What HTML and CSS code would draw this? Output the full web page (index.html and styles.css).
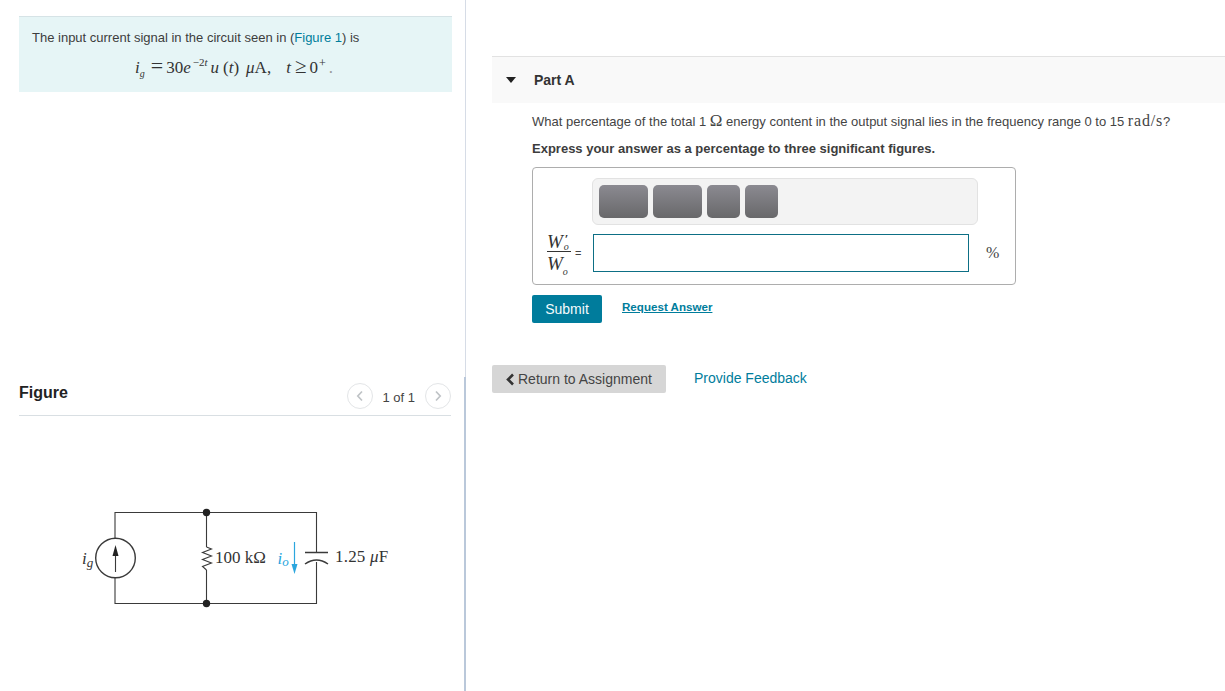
FILE: index.html
```html
<!DOCTYPE html>
<html lang="en">
<head>
<meta charset="utf-8">
<title>Part A</title>
<link rel="stylesheet" href="styles.css">
</head>
<body>
<div class="page">
  <aside class="left">
    <section class="intro">
      <p class="intro-text">The input current signal in the circuit seen in (<a class="link" href="#">Figure 1</a>) is</p>
      <p class="formula"><i>i<sub>g</sub></i><span class="eq">=</span>30<i>e</i><sup class="exp">−2<i>t</i></sup><i>u</i><span class="paren">(<i>t</i>)</span><span class="unit"><i>μ</i>A,</span><i>t</i><span class="ge">≥</span>0<sup class="plus">+</sup><span class="dot">.</span></p>
    </section>
    <header class="figure-head">
      <h2 class="figure-title">Figure</h2>
      <div class="pager">
        <span class="pager-btn"><svg width="10" height="12" viewBox="0 0 10 12"><path d="M7 1.500 2.800 6 7 10.500" fill="none" stroke="#bfc3c6" stroke-width="1.700"/></svg></span>
        <span class="pager-text">1 of 1</span>
        <span class="pager-btn"><svg width="10" height="12" viewBox="0 0 10 12"><path d="M3 1.500 7.200 6 3 10.500" fill="none" stroke="#bfc3c6" stroke-width="1.700"/></svg></span>
      </div>
    </header>
    <div class="figure">
      <svg class="circuit" width="350" height="130" viewBox="0 0 350 130">
        <g fill="none" stroke="#3a3a3a" stroke-width="1.100">
          <path d="M55 48V22.500H256.500V62M256.500 72V113.500H55V88M146.500 22.500V57M146.500 80V113.500"/>
          <path d="M146.500 57 151.500 59 142.500 62.500 151.500 66 142.500 69.500 151.500 73 142.500 76.500 146.500 80"/>
          <circle cx="55.500" cy="68" r="19.800" stroke-width="1.400"/>
          <path d="M55.500 82V62"/>
          <path d="M245 62.500H268M245 74Q256.500 66 268 74" stroke-width="1.500"/>
        </g>
        <path d="M55.500 55 52.500 66H58.500Z" fill="#222"/>
        <circle cx="146.500" cy="22.500" r="3.700" fill="#222"/>
        <circle cx="146.500" cy="113.500" r="3.700" fill="#222"/>
        <path d="M234.500 52V76" stroke="#2ba6de" stroke-width="1.200"/>
        <path d="M231.500 74H237.500L234.500 84Z" fill="#2ba6de"/>
        <text x="155" y="73" class="ctext">100 kΩ</text>
        <text x="275" y="72" class="ctext wide-text">1.25 <tspan font-style="italic">μ</tspan>F</text>
        <text x="22" y="74" class="ctext ital">i<tspan font-size="13" dy="3">g</tspan></text>
        <text x="217.500" y="74" class="ctext ital blue">i<tspan font-size="13" dy="2">o</tspan></text>
      </svg>
    </div>
  </aside>
  <main class="right">
    <div class="part-head"><span class="caret"></span><h2 class="part-title">Part A</h2></div>
    <div class="part-body">
      <p class="question">What percentage of the total 1 <span class="m omega">Ω</span> energy content in the output signal lies in the frequency range 0 to 15 <span class="m rad">rad/s</span>?</p>
      <p class="instruction">Express your answer as a percentage to three significant figures.</p>
      <div class="answer">
        <div class="toolbar">
          <span class="tool wide"></span><span class="tool wide"></span><span class="tool"></span><span class="tool"></span>
        </div>
        <div class="answer-row">
          <div class="fraction">
            <span class="num"><i>W</i><i class="sub-o">o</i></span>
            <span class="den"><i>W</i><sub><i>o</i></sub></span>
          </div>
          <span class="equals">=</span>
          <div class="input"></div>
          <span class="percent">%</span>
        </div>
      </div>
      <div class="actions">
        <button class="submit">Submit</button>
        <a class="request" href="#">Request Answer</a>
      </div>
    </div>
    <div class="footer-row">
      <a class="return" href="#"><svg width="10" height="13" viewBox="0 0 10 13"><path d="M8 1.500 3 6.500 8 11.500" fill="none" stroke="#333" stroke-width="2.600"/></svg>Return to Assignment</a>
      <a class="feedback" href="#">Provide Feedback</a>
    </div>
  </main>
</div>
</body>
</html>
```
FILE: styles.css
```css
* { box-sizing: border-box; }
html, body { margin: 0; padding: 0; }
body {
  width: 1225px;
  height: 691px;
  overflow: hidden;
  background: #fff;
  font-family: "Liberation Sans", Arial, sans-serif;
  color: #333;
}
p, h2 { margin: 0; }
.page { display: flex; height: 691px; }
.left {
  width: 466px;
  flex: none;
  padding: 16px 14px 0 19px;
  background:
    linear-gradient(#d6dce6, #d6dce6) 465px 0 / 1px 377px no-repeat,
    linear-gradient(#bac8da, #bac8da) 464px 377px / 2px 314px no-repeat;
}
.intro {
  height: 76px;
  background: #e6f5f6;
  border-top: 1px solid #d6e3e6;
  padding: 13px 13px 0;
}
.intro-text { font-size: 13px; line-height: 16px; color: #3d3d3d; white-space: nowrap; }
.link { color: #007d9c; text-decoration: none; }
.formula {
  margin: 12px 0 0 103px;
  font-family: "Liberation Serif", serif;
  font-size: 17px;
  line-height: 20px;
  color: #333;
  white-space: nowrap;
}
.formula sub { font-size: 10px; line-height: 0; }
.formula sup { line-height: 0; }
.exp { font-size: 11px; vertical-align: 7px; margin: 0 3px 0 2px; }
.plus { font-size: 12px; vertical-align: 6px; margin-left: 1px; }
.eq { margin: 0 3px 0 6px; font-size: 22px; line-height: 0; }
.paren { margin: 0 7px 0 4px; }
.unit { margin-right: 15px; }
.ge { margin: 0 3px 0 4px; font-size: 21px; line-height: 0; }
.dot { color: #999; margin-left: 3px; }
.figure-head {
  margin: 290px 1px 0 0;
  height: 34px;
  border-bottom: 1px solid #d9dfe3;
  display: flex;
  justify-content: space-between;
  align-items: flex-start;
}
.figure-title { font-size: 16px; line-height: 22px; font-weight: bold; color: #222; }
.pager { display: flex; align-items: center; padding-top: 1px; }
.pager-btn {
  width: 26px;
  height: 26px;
  border: 1px solid #e3e5e7;
  border-radius: 50%;
  display: flex;
  align-items: center;
  justify-content: center;
}
.pager-text { font-size: 13px; margin: 2px 10px 0 9px; color: #444; }
.figure { padding: 74px 0 0 41px; }
.circuit { display: block; }
.ctext { font-family: "Liberation Serif", serif; font-size: 17px; fill: #333; }
.wide-text { letter-spacing: 0.200px; }
.ital { font-style: italic; }
.blue { fill: #2ba6de; }
.right { flex: 1; padding: 56px 0 0 26px; }
.part-head {
  height: 47px;
  background: #f9f9f9;
  border-top: 1px solid #e2e2e2;
  display: flex;
  align-items: center;
  padding: 0 0 0 14px;
}
.caret {
  width: 0;
  height: 0;
  border-left: 5px solid transparent;
  border-right: 5px solid transparent;
  border-top: 6px solid #222;
  margin-right: 18px;
}
.part-title { font-size: 14px; font-weight: bold; line-height: 16px; color: #333; }
.part-body { padding: 10px 0 0 40px; }
.question { font-size: 13px; line-height: 17px; color: #444; white-space: nowrap; }
.m { font-family: "Liberation Serif", serif; font-size: 16px; line-height: 0; }
.omega { font-size: 17px; }
.rad { letter-spacing: 0.800px; }
.instruction { font-size: 13px; font-weight: bold; line-height: 16px; margin-top: 11px; color: #3d3d3d; white-space: nowrap; }
.answer {
  width: 484px;
  height: 118px;
  margin-top: 10px;
  border: 1px solid #adadad;
  border-radius: 4px;
  padding: 10px 0 0 59px;
}
.toolbar {
  width: 386px;
  height: 47px;
  background: #f3f3f3;
  border: 1px solid #e2e2e2;
  border-radius: 6px;
  display: flex;
  gap: 5px;
  padding: 6px;
}
.tool {
  width: 33px;
  height: 33px;
  border-radius: 5px;
  background: linear-gradient(#8b8a91, #68686a);
}
.tool.wide { width: 49px; }
.answer-row { display: flex; align-items: center; height: 38px; margin: 9px 0 0 -45px; }
.fraction {
  width: 24px;
  flex: none;
  display: flex;
  flex-direction: column;
  font-family: "Liberation Serif", serif;
  font-size: 19px;
  color: #333;
}
.fraction sub { font-size: 10px; line-height: 0; }
.num { line-height: 19px; border-bottom: 1px solid #333; white-space: nowrap; }
.sub-o { font-size: 10px; position: relative; vertical-align: -2px; line-height: 0; margin-left: 1px; }
.sub-o::before {
  content: "′";
  position: absolute;
  left: 1px;
  top: -2px;
  font-size: 13px;
  font-weight: bold;
  font-style: normal;
}
.den { line-height: 23px; white-space: nowrap; }
.equals { font-size: 11px; width: 22px; padding-left: 4px; color: #444; }
.input { width: 376px; height: 38px; border: 1px solid #0d6f85; background: #fff; flex: none; }
.percent { font-family: "Liberation Serif", serif; font-size: 16px; margin-left: 17px; color: #444; }
.actions { display: flex; align-items: flex-start; margin-top: 10px; }
.submit {
  width: 70px;
  height: 28px;
  background: #007c9c;
  color: #f4fbfd;
  border: 0;
  border-radius: 2px;
  font-family: inherit;
  font-size: 14px;
  font-weight: normal;
  padding: 0;
}
.request { margin-left: 20px; font-size: 11.600px; font-weight: bold; line-height: 16px; padding-top: 4px; color: #007d9c; }
.footer-row { display: flex; align-items: flex-start; margin-top: 42px; }
.return {
  width: 174px;
  height: 28px;
  background: #d6d6d6;
  border-radius: 2px;
  display: flex;
  align-items: center;
  padding-left: 13px;
  font-size: 14px;
  color: #444;
  text-decoration: none;
  white-space: nowrap;
}
.return svg { margin-right: 3px; }
.feedback { margin-left: 28px; font-size: 14px; line-height: 26px; color: #007d9c; text-decoration: none; }
```
